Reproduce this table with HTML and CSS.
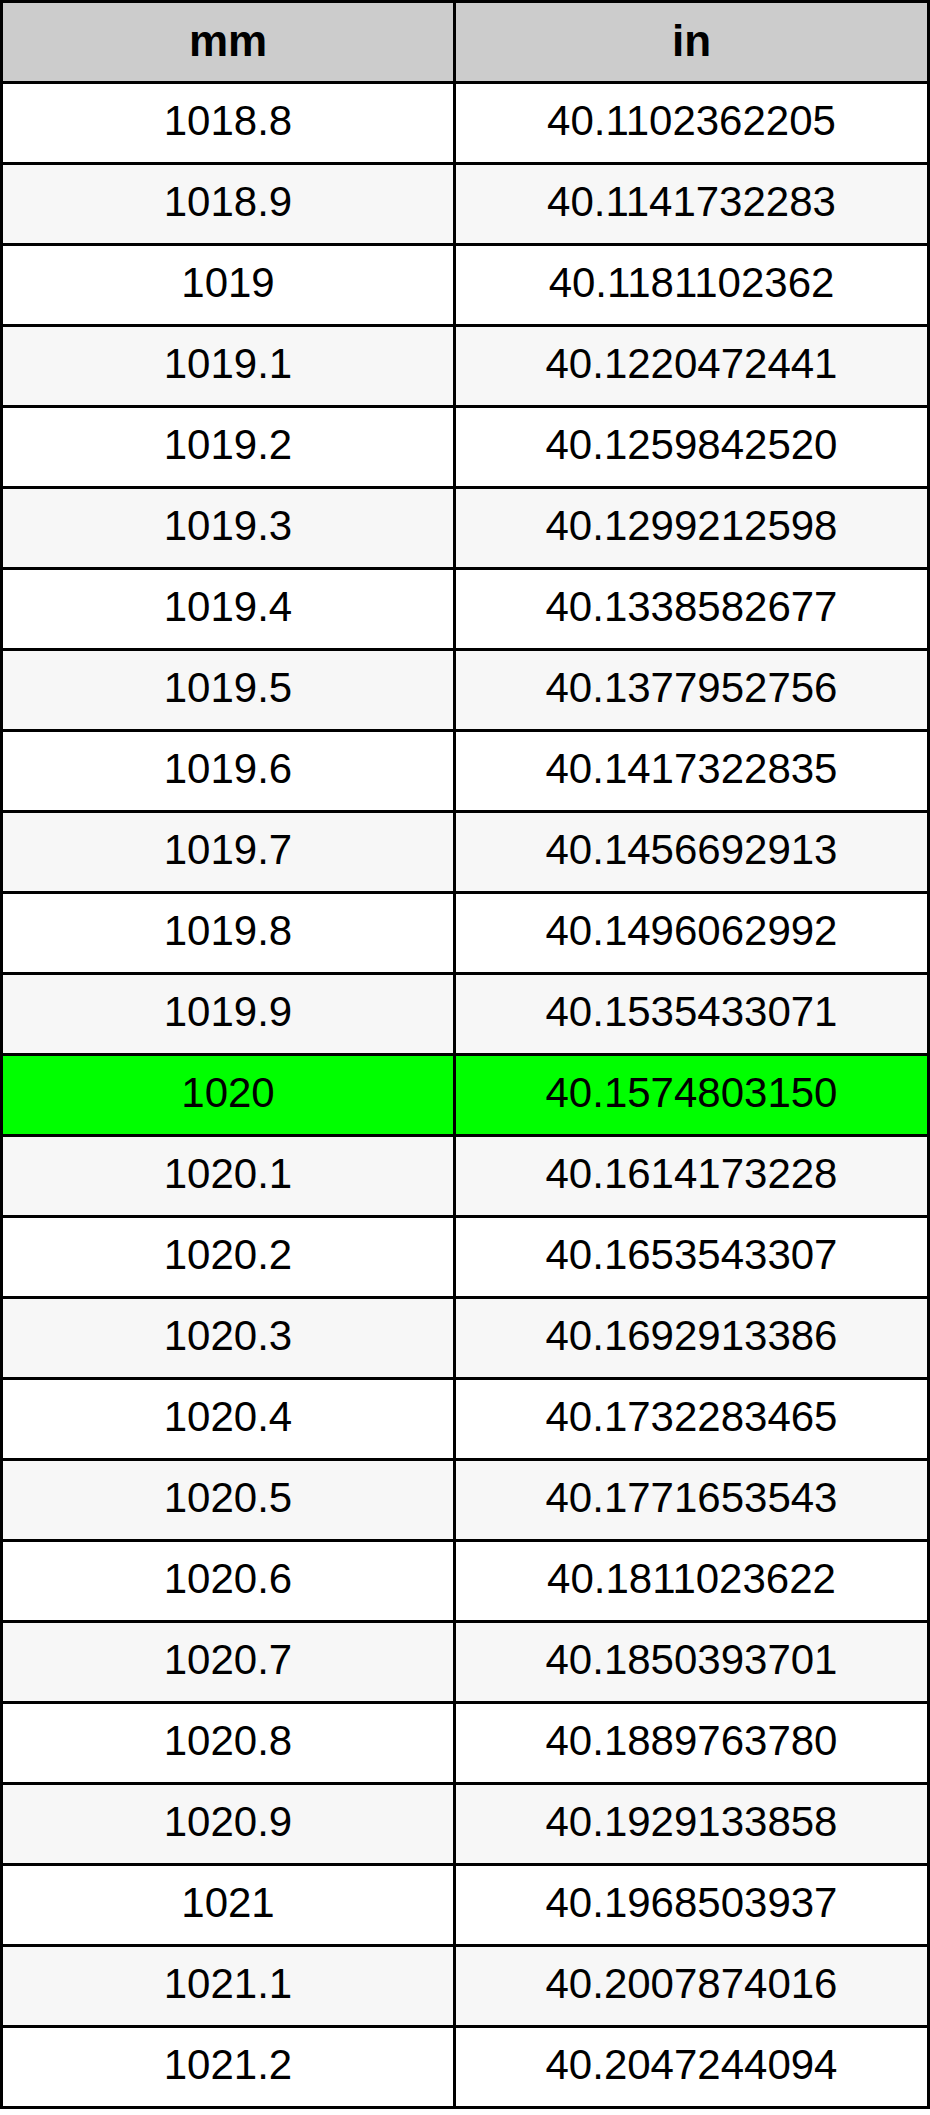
FILE: index.html
```html
<!DOCTYPE html>
<html>
<head>
<meta charset="utf-8">
<link rel="stylesheet" href="styles.css">
</head>
<body>
<table class="conv">
<colgroup><col class="c-mm"><col class="c-in"></colgroup>
<thead>
<tr><th>mm</th><th>in</th></tr>
</thead>
<tbody>
<tr><td>1018.8</td><td>40.1102362205</td></tr>
<tr><td>1018.9</td><td>40.1141732283</td></tr>
<tr><td>1019</td><td>40.1181102362</td></tr>
<tr><td>1019.1</td><td>40.1220472441</td></tr>
<tr><td>1019.2</td><td>40.1259842520</td></tr>
<tr><td>1019.3</td><td>40.1299212598</td></tr>
<tr><td>1019.4</td><td>40.1338582677</td></tr>
<tr><td>1019.5</td><td>40.1377952756</td></tr>
<tr><td>1019.6</td><td>40.1417322835</td></tr>
<tr><td>1019.7</td><td>40.1456692913</td></tr>
<tr><td>1019.8</td><td>40.1496062992</td></tr>
<tr><td>1019.9</td><td>40.1535433071</td></tr>
<tr class="hl"><td>1020</td><td>40.1574803150</td></tr>
<tr><td>1020.1</td><td>40.1614173228</td></tr>
<tr><td>1020.2</td><td>40.1653543307</td></tr>
<tr><td>1020.3</td><td>40.1692913386</td></tr>
<tr><td>1020.4</td><td>40.1732283465</td></tr>
<tr><td>1020.5</td><td>40.1771653543</td></tr>
<tr><td>1020.6</td><td>40.1811023622</td></tr>
<tr><td>1020.7</td><td>40.1850393701</td></tr>
<tr><td>1020.8</td><td>40.1889763780</td></tr>
<tr><td>1020.9</td><td>40.1929133858</td></tr>
<tr><td>1021</td><td>40.1968503937</td></tr>
<tr><td>1021.1</td><td>40.2007874016</td></tr>
<tr><td>1021.2</td><td>40.2047244094</td></tr>
</tbody>
</table>
</body>
</html>
```
FILE: styles.css
```css
html, body {
  margin: 0;
  padding: 0;
  background: #ffffff;
}
.conv {
  width: 930px;
  table-layout: fixed;
  border-collapse: separate;
  border-spacing: 0;
  border-left: 3px solid #000;
  border-top: 3px solid #000;
  font-family: "Liberation Sans", Arial, sans-serif;
  color: #000;
}
.c-mm { width: 453px; }
.conv th, .conv td {
  border-right: 3px solid #000;
  border-bottom: 3px solid #000;
  padding: 0;
  text-align: center;
  box-sizing: border-box;
}
.conv th {
  height: 81px;
  background: #cccccc;
  font-size: 44px;
  font-weight: bold;
  line-height: 76px;
  padding-bottom: 2px;
}
.conv td {
  height: 81px;
  font-size: 42px;
  line-height: 74px;
  padding-bottom: 4px;
  background: #ffffff;
}
.conv tbody tr:nth-child(even) td {
  background: #f7f7f7;
}
.conv tbody tr.hl td {
  background: #00ff00;
}
```
